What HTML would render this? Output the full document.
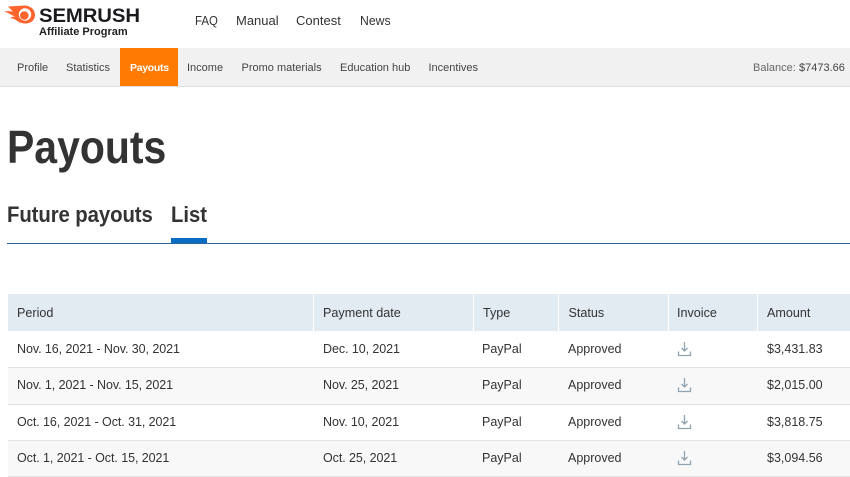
<!DOCTYPE html>
<html><head><meta charset="utf-8">
<style>
html,body{margin:0;padding:0;background:#fff}
body{width:850px;height:477px;position:relative;overflow:hidden;font-family:"Liberation Sans",sans-serif;color:#333}
.a{position:absolute;white-space:nowrap}
.top{font-size:13px;top:14px;line-height:14px;color:#333;transform-origin:0 0}
.nav{font-size:11px;top:61px;line-height:14px;color:#444}
.h{font-size:12.6px;top:306px;line-height:14px;color:#333}
.c{font-size:12.5px;line-height:14px;color:#333}
.d{letter-spacing:-.07px}
.s{position:absolute;top:294px;width:1px;height:37px;background:#fff}
.ln{position:absolute;left:8px;width:842px;height:1px;background:#e2e2e2}
.bg{position:absolute;left:8px;width:842px;background:#f8f8f8}
</style></head><body>
<svg class="a" style="left:0;top:0" width="38" height="30" viewBox="0 0 38 30">
<path d="M8 6.500L24 5.500C31 5.500 35 10 35 15C35 20 31 23.500 25.500 23.500C20 23.500 17.500 21 15 19.500C13.500 18.700 11.500 18.300 10 18C12 17 13 16.500 15 16.500C11 15 8 12.500 4 11.500C7 11 10 11 13 11.500C11 9.500 9.500 8 8 6.500Z" fill="#ff642d"/>
<circle cx="25" cy="14.500" r="6.200" fill="#fff"/>
<circle cx="24.300" cy="15.500" r="4.300" fill="#ff642d"/>
</svg>
<div class="a" style="left:39px;top:7px;font-size:19px;line-height:20px;font-weight:700;color:#1b1b1f;letter-spacing:-.1px;transform-origin:0 0;transform:scaleX(1.07)">SEMRUSH</div>
<div class="a" style="left:39px;top:26px;font-size:11px;line-height:13px;font-weight:700;color:#222">Affiliate Program</div>
<div class="a top" style="left:195px;transform:scaleX(.88)">FAQ</div>
<div class="a top" style="left:236px">Manual</div>
<div class="a top" style="left:296px">Contest</div>
<div class="a top" style="left:360px;transform:scaleX(.94)">News</div>

<div class="a" style="left:0;top:48px;width:850px;height:38px;background:#f1f1f1;border-bottom:1px solid #ddd"></div>
<div class="a" style="left:120px;top:48px;width:58px;height:38px;background:#ff7a00"></div>
<div class="a nav" style="left:17px">Profile</div>
<div class="a nav" style="left:66px">Statistics</div>
<div class="a nav" style="left:130px;color:#fff;font-weight:700;font-size:10.5px;letter-spacing:-.3px">Payouts</div>
<div class="a nav" style="left:187px">Income</div>
<div class="a nav" style="left:241.500px">Promo materials</div>
<div class="a nav" style="left:340px">Education hub</div>
<div class="a nav" style="left:428.500px">Incentives</div>
<div class="a nav" style="left:753px;color:#666">Balance:</div>
<div class="a nav" style="left:799px">$7473.66</div>

<div class="a" style="left:7px;top:120px;font-size:46px;line-height:54px;font-weight:700;color:#333;transform-origin:0 0;transform:scaleX(.89)">Payouts</div>
<div class="a" style="left:7px;top:201px;font-size:22px;line-height:28px;font-weight:700;color:#333;letter-spacing:-.1px;transform-origin:0 0;transform:scaleX(.925)">Future payouts</div>
<div class="a" style="left:171px;top:201px;font-size:22px;line-height:28px;font-weight:700;color:#333;transform-origin:0 0;transform:scaleX(.92)">List</div>
<div class="a" style="left:7px;top:243px;width:843px;height:1px;background:#2a65a0"></div>
<div class="a" style="left:171px;top:238px;width:36px;height:5px;background:#0b6cc4"></div>

<div class="a" style="left:8px;top:294px;width:842px;height:37px;background:#e2eaf2"></div>
<div class="s" style="left:313px"></div>
<div class="s" style="left:473px"></div>
<div class="s" style="left:558px"></div>
<div class="s" style="left:668px"></div>
<div class="s" style="left:757px"></div>
<div class="a h" style="left:17px">Period</div>
<div class="a h" style="left:323px">Payment date</div>
<div class="a h" style="left:483px">Type</div>
<div class="a h" style="left:568.500px">Status</div>
<div class="a h" style="left:677px">Invoice</div>
<div class="a h" style="left:767px">Amount</div>

<div class="bg" style="top:368px;height:36px"></div>
<div class="bg" style="top:441px;height:36px"></div>
<div class="ln" style="top:367px"></div>
<div class="ln" style="top:404px"></div>
<div class="ln" style="top:440px"></div>
<div class="ln" style="top:476px"></div>

<div class="a c d" style="left:17px;top:342px">Nov. 16, 2021 - Nov. 30, 2021</div>
<div class="a c d" style="left:323px;top:342px">Dec. 10, 2021</div>
<div class="a c" style="left:482px;top:342px">PayPal</div>
<div class="a c" style="left:568px;top:342px">Approved</div>
<div class="a c" style="left:767px;top:342px">$3,431.83</div>
<svg class="a" style="left:677px;top:341px" width="15" height="16" viewBox="0 0 15 16" fill="none" stroke="#8fa3b0" stroke-width="1.300"><path d="M7.500 1V10M4.500 7L7.500 10L10.500 7M1.500 10.500V14.500H13.500V10.500"/></svg>

<div class="a c d" style="left:17px;top:378px">Nov. 1, 2021 - Nov. 15, 2021</div>
<div class="a c d" style="left:323px;top:378px">Nov. 25, 2021</div>
<div class="a c" style="left:482px;top:378px">PayPal</div>
<div class="a c" style="left:568px;top:378px">Approved</div>
<div class="a c" style="left:767px;top:378px">$2,015.00</div>
<svg class="a" style="left:677px;top:377px" width="15" height="16" viewBox="0 0 15 16" fill="none" stroke="#8fa3b0" stroke-width="1.300"><path d="M7.500 1V10M4.500 7L7.500 10L10.500 7M1.500 10.500V14.500H13.500V10.500"/></svg>

<div class="a c d" style="left:17px;top:415px">Oct. 16, 2021 - Oct. 31, 2021</div>
<div class="a c d" style="left:323px;top:415px">Nov. 10, 2021</div>
<div class="a c" style="left:482px;top:415px">PayPal</div>
<div class="a c" style="left:568px;top:415px">Approved</div>
<div class="a c" style="left:767px;top:415px">$3,818.75</div>
<svg class="a" style="left:677px;top:414px" width="15" height="16" viewBox="0 0 15 16" fill="none" stroke="#8fa3b0" stroke-width="1.300"><path d="M7.500 1V10M4.500 7L7.500 10L10.500 7M1.500 10.500V14.500H13.500V10.500"/></svg>

<div class="a c d" style="left:17px;top:451px">Oct. 1, 2021 - Oct. 15, 2021</div>
<div class="a c d" style="left:323px;top:451px">Oct. 25, 2021</div>
<div class="a c" style="left:482px;top:451px">PayPal</div>
<div class="a c" style="left:568px;top:451px">Approved</div>
<div class="a c" style="left:767px;top:451px">$3,094.56</div>
<svg class="a" style="left:677px;top:450px" width="15" height="16" viewBox="0 0 15 16" fill="none" stroke="#8fa3b0" stroke-width="1.300"><path d="M7.500 1V10M4.500 7L7.500 10L10.500 7M1.500 10.500V14.500H13.500V10.500"/></svg>
</body></html>
